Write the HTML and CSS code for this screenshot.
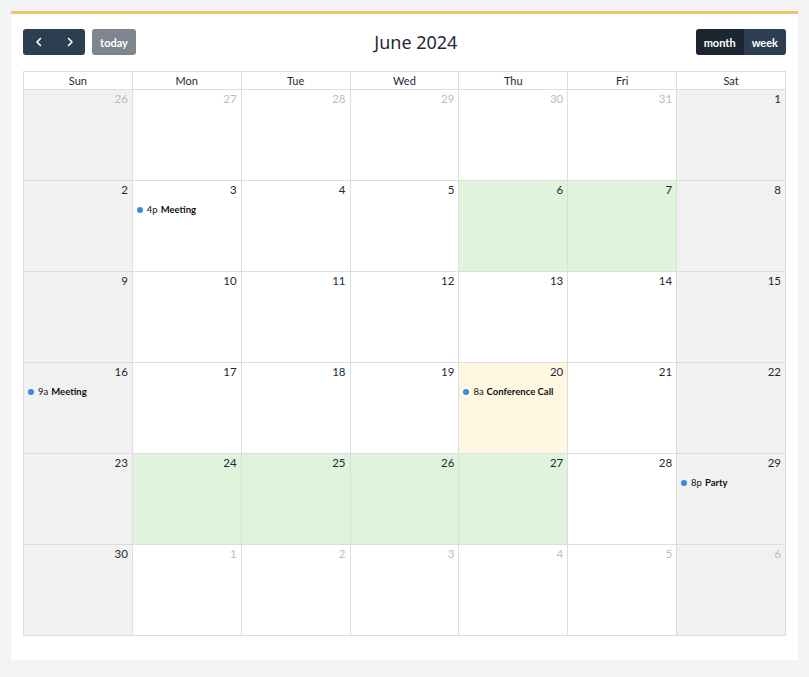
FILE: index.html
```html
<!DOCTYPE html>
<html>
<head>
<meta charset="utf-8">
<link rel="stylesheet" href="styles.css">
</head>
<body>
<div class="card">
  <div class="toolbar">
    <div class="left">
      <div class="btn-group">
        <button class="btn dark nav"><svg width="12" height="12" viewBox="0 0 12 12"><path d="M7.5 2.5 4 6l3.5 3.5" fill="none" stroke="#fff" stroke-width="1.6" stroke-linecap="round" stroke-linejoin="round"/></svg></button>
        <button class="btn dark nav"><svg width="12" height="12" viewBox="0 0 12 12"><path d="M4.5 2.5 8 6l-3.5 3.5" fill="none" stroke="#fff" stroke-width="1.6" stroke-linecap="round" stroke-linejoin="round"/></svg></button>
      </div>
      <button class="btn today">today</button>
    </div>
    <h2 class="title">June 2024</h2>
    <div class="btn-group">
      <button class="btn active">month</button>
      <button class="btn dark">week</button>
    </div>
  </div>
  <table class="cal">
    <thead>
      <tr><th>Sun</th><th>Mon</th><th>Tue</th><th>Wed</th><th>Thu</th><th>Fri</th><th>Sat</th></tr>
    </thead>
    <tbody>
      <tr>
        <td class="we"><div class="num other">26</div></td>
        <td><div class="num other">27</div></td>
        <td><div class="num other">28</div></td>
        <td><div class="num other">29</div></td>
        <td><div class="num other">30</div></td>
        <td><div class="num other">31</div></td>
        <td class="we"><div class="num">1</div></td>
      </tr>
      <tr>
        <td class="we"><div class="num">2</div></td>
        <td><div class="num">3</div><div class="ev"><span class="dot"></span><span class="time">4p</span> <b>Meeting</b></div></td>
        <td><div class="num">4</div></td>
        <td><div class="num">5</div></td>
        <td class="green"><div class="num">6</div></td>
        <td class="green"><div class="num">7</div></td>
        <td class="we"><div class="num">8</div></td>
      </tr>
      <tr>
        <td class="we"><div class="num">9</div></td>
        <td><div class="num">10</div></td>
        <td><div class="num">11</div></td>
        <td><div class="num">12</div></td>
        <td><div class="num">13</div></td>
        <td><div class="num">14</div></td>
        <td class="we"><div class="num">15</div></td>
      </tr>
      <tr>
        <td class="we"><div class="num">16</div><div class="ev"><span class="dot"></span><span class="time">9a</span> <b>Meeting</b></div></td>
        <td><div class="num">17</div></td>
        <td><div class="num">18</div></td>
        <td><div class="num">19</div></td>
        <td class="today-cell"><div class="num">20</div><div class="ev"><span class="dot"></span><span class="time">8a</span> <b>Conference Call</b></div></td>
        <td><div class="num">21</div></td>
        <td class="we"><div class="num">22</div></td>
      </tr>
      <tr>
        <td class="we"><div class="num">23</div></td>
        <td class="green"><div class="num">24</div></td>
        <td class="green"><div class="num">25</div></td>
        <td class="green"><div class="num">26</div></td>
        <td class="green"><div class="num">27</div></td>
        <td><div class="num">28</div></td>
        <td class="we"><div class="num">29</div><div class="ev"><span class="dot"></span><span class="time">8p</span> <b>Party</b></div></td>
      </tr>
      <tr>
        <td class="we"><div class="num">30</div></td>
        <td><div class="num other">1</div></td>
        <td><div class="num other">2</div></td>
        <td><div class="num other">3</div></td>
        <td><div class="num other">4</div></td>
        <td><div class="num other">5</div></td>
        <td class="we"><div class="num other">6</div></td>
      </tr>
    </tbody>
  </table>
</div>
</body>
</html>
```

FILE: styles.css
```css
html, body {
  margin: 0;
  padding: 0;
  background: #f3f4f6;
}
body {
  padding: 11px 11px 0 11px;
  font-family: "Lato", "Noto Sans", sans-serif;
  color: #1f2937;
}
.card {
  width: 787px;
  box-sizing: border-box;
  background: #fff;
  border-top: 3px solid #efc46c;
  padding: 15px 12px 24px 12px;
  box-shadow: 0 1px 1px rgba(0,0,0,0.08);
}
.toolbar {
  display: flex;
  align-items: center;
  justify-content: space-between;
  height: 26px;
  margin-bottom: 16px;
}
.left {
  display: flex;
  gap: 7px;
}
.btn-group {
  display: flex;
}
.btn {
  height: 26px;
  border: none;
  font-family: "Lato", "Noto Sans", sans-serif;
  font-size: 11px;
  font-weight: 700;
  color: #fff;
  padding: 0 8px;
  margin: 0;
  border-radius: 3px;
  display: flex;
  align-items: center;
  justify-content: center;
}
.btn-group .btn {
  border-radius: 0;
}
.btn-group .btn:first-child {
  border-radius: 3px 0 0 3px;
}
.btn-group .btn:last-child {
  border-radius: 0 3px 3px 0;
}
.dark {
  background: #2c3e50;
}
.active {
  background: #1b2631;
}
.nav {
  width: 31px;
  padding: 0;
}
.today {
  background: #7e858f;
  width: 44px;
  padding: 0;
}
.title {
  margin: 0;
  font-family: "Noto Sans", sans-serif;
  font-weight: 400;
  font-size: 18px;
  color: #1f2937;
}
.cal {
  width: 763px;
  border-collapse: collapse;
  table-layout: fixed;
}
.cal th, .cal td {
  border: 1px solid #dddddd;
  padding: 0;
}
.cal th {
  height: 17px;
  font-size: 11px;
  font-weight: 400;
  color: #1f2937;
  text-align: center;
}
.cal td {
  height: 90px;
  vertical-align: top;
}
.cal td.we {
  background: #f1f1f1;
}
.cal td.green {
  background: #e0f3dc;
}
.cal td.today-cell {
  background: #fef8e3;
}
.num {
  text-align: right;
  font-size: 11.5px;
  padding: 2px 4px 0 0;
  height: 14px;
  line-height: 14px;
  color: #1f2937;
}
.num.other {
  color: #bdbdbd;
}
.ev {
  margin-top: 7px;
  padding-left: 4px;
  font-size: 9.5px;
  color: #111;
  display: flex;
  align-items: center;
  white-space: nowrap;
}
.dot {
  width: 6px;
  height: 6px;
  border-radius: 50%;
  background: #3a88e0;
  margin-right: 4px;
}
.time {
  margin-right: 3px;
}
.ev b {
  font-weight: 700;
}
```
